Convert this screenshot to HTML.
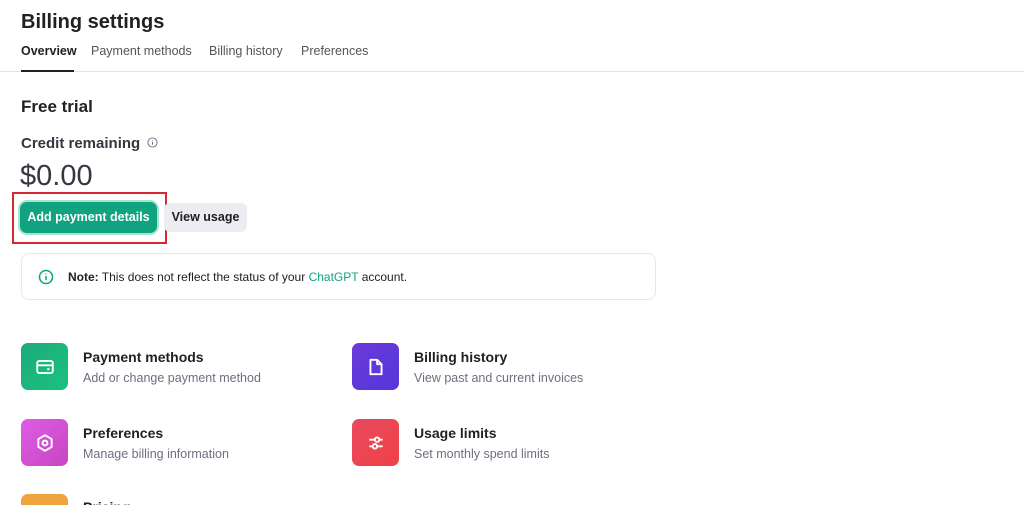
<!DOCTYPE html>
<html><head><meta charset="utf-8"><style>
*{margin:0;padding:0;box-sizing:border-box}
html,body{width:1024px;height:505px;overflow:hidden}
body{background:#fff;font-family:"Liberation Sans",sans-serif;color:#202123;position:relative}
.a{position:absolute;white-space:nowrap}
.tab{font-size:12.5px;color:#555;top:44px}
.ic{position:absolute;width:47px;height:47px;border-radius:7px;display:flex;align-items:center;justify-content:center}
.t{font-size:14px;font-weight:bold;color:#202123}
.s{font-size:12.5px;color:#6e6e80}
</style></head><body>
<div class="a" style="left:21px;top:11px;font-size:20px;font-weight:bold">Billing settings</div>
<div class="a tab" style="left:21px;color:#202123;font-weight:bold">Overview</div>
<div class="a tab" style="left:91px">Payment methods</div>
<div class="a tab" style="left:209px">Billing history</div>
<div class="a tab" style="left:301px">Preferences</div>
<div class="a" style="left:0;top:71px;width:1024px;height:1px;background:#e5e5e5"></div>
<div class="a" style="left:21px;top:70px;width:53px;height:2px;background:#202123"></div>
<div class="a" style="left:21px;top:97px;font-size:17px;font-weight:bold">Free trial</div>
<div class="a" style="left:21px;top:135px;font-size:15px;font-weight:bold;color:#353740">Credit remaining</div>
<svg class="a" style="left:147px;top:137px" width="11" height="11" viewBox="0 0 12 12"><circle cx="6" cy="6" r="5" fill="none" stroke="#6e6e80" stroke-width="1"/><path d="M6 5.3v3M6 3.5v.6" stroke="#6e6e80" stroke-width="1.1"/></svg>
<div class="a" style="left:20px;top:160px;font-size:29px;color:#353740">$0.00</div>
<div class="a" style="left:12px;top:192px;width:155px;height:52px;border:2px solid #d9272e"></div>
<div class="a" style="left:20px;top:202px;width:137px;height:31px;border-radius:7px;background:#10a37f;box-shadow:0 0 0 2px #a7e3cf;color:#fff;font-size:12.5px;font-weight:bold;text-align:center;line-height:31px">Add payment details</div>
<div class="a" style="left:164px;top:203px;width:83px;height:29px;border-radius:6px;background:#ececf1;font-size:12.5px;font-weight:bold;text-align:center;line-height:29px">View usage</div>
<div class="a" style="left:21px;top:253px;width:635px;height:47px;border:1px solid #e8e8e8;border-radius:8px"></div>
<svg class="a" style="left:38px;top:269px" width="16" height="16" viewBox="0 0 16 16"><circle cx="8" cy="8" r="6.5" fill="none" stroke="#10a37f" stroke-width="1.5"/><path d="M8 7v4.2M8 4.6v.9" stroke="#10a37f" stroke-width="1.5"/></svg>
<div class="a" style="left:68px;top:270px;font-size:12px;color:#202123"><b>Note:</b> This does not reflect the status of your <span style="color:#10a37f">ChatGPT</span> account.</div>

<div class="ic" style="left:21px;top:343px;background:linear-gradient(135deg,#1ea97c,#19c37d)"><svg width="20" height="20" viewBox="0 0 18 18" fill="none" stroke="#fff" stroke-width="1.7"><rect x="2" y="3.5" width="14" height="11" rx="2"/><path d="M2 7.5h14M11 11h2"/></svg></div>
<div class="a t" style="left:83px;top:349px">Payment methods</div>
<div class="a s" style="left:83px;top:371px">Add or change payment method</div>
<div class="ic" style="left:352px;top:343px;background:linear-gradient(135deg,#6b3ad8,#5436da)"><svg width="20" height="20" viewBox="0 0 18 18" fill="none" stroke="#fff" stroke-width="1.7" stroke-linejoin="round"><path d="M4 2.5h6l4 4v9H4z"/><path d="M10 2.5v4h4"/></svg></div>
<div class="a t" style="left:414px;top:349px">Billing history</div>
<div class="a s" style="left:414px;top:371px">View past and current invoices</div>
<div class="ic" style="left:21px;top:419px;background:linear-gradient(135deg,#dd5ce5,#c846c0)"><svg width="20" height="20" viewBox="0 0 18 18" fill="none" stroke="#fff" stroke-width="1.7" stroke-linejoin="round"><path d="M9 2l6 3.5v7L9 16l-6-3.5v-7z"/><circle cx="9" cy="9" r="2.2"/></svg></div>
<div class="a t" style="left:83px;top:425px">Preferences</div>
<div class="a s" style="left:83px;top:447px">Manage billing information</div>
<div class="ic" style="left:352px;top:419px;background:linear-gradient(135deg,#e84a5f,#ef4146)"><svg width="20" height="20" viewBox="0 0 18 18" fill="none" stroke="#fff" stroke-width="1.7"><circle cx="10" cy="6" r="2"/><circle cx="8" cy="12" r="2"/><path d="M3 6h5M12 6h3M3 12h3M10 12h5"/></svg></div>
<div class="a t" style="left:414px;top:425px">Usage limits</div>
<div class="a s" style="left:414px;top:447px">Set monthly spend limits</div>
<div class="ic" style="left:21px;top:494px;background:#f0a43d"></div>
<div class="a t" style="left:83px;top:499px">Pricing</div>
</body></html>
